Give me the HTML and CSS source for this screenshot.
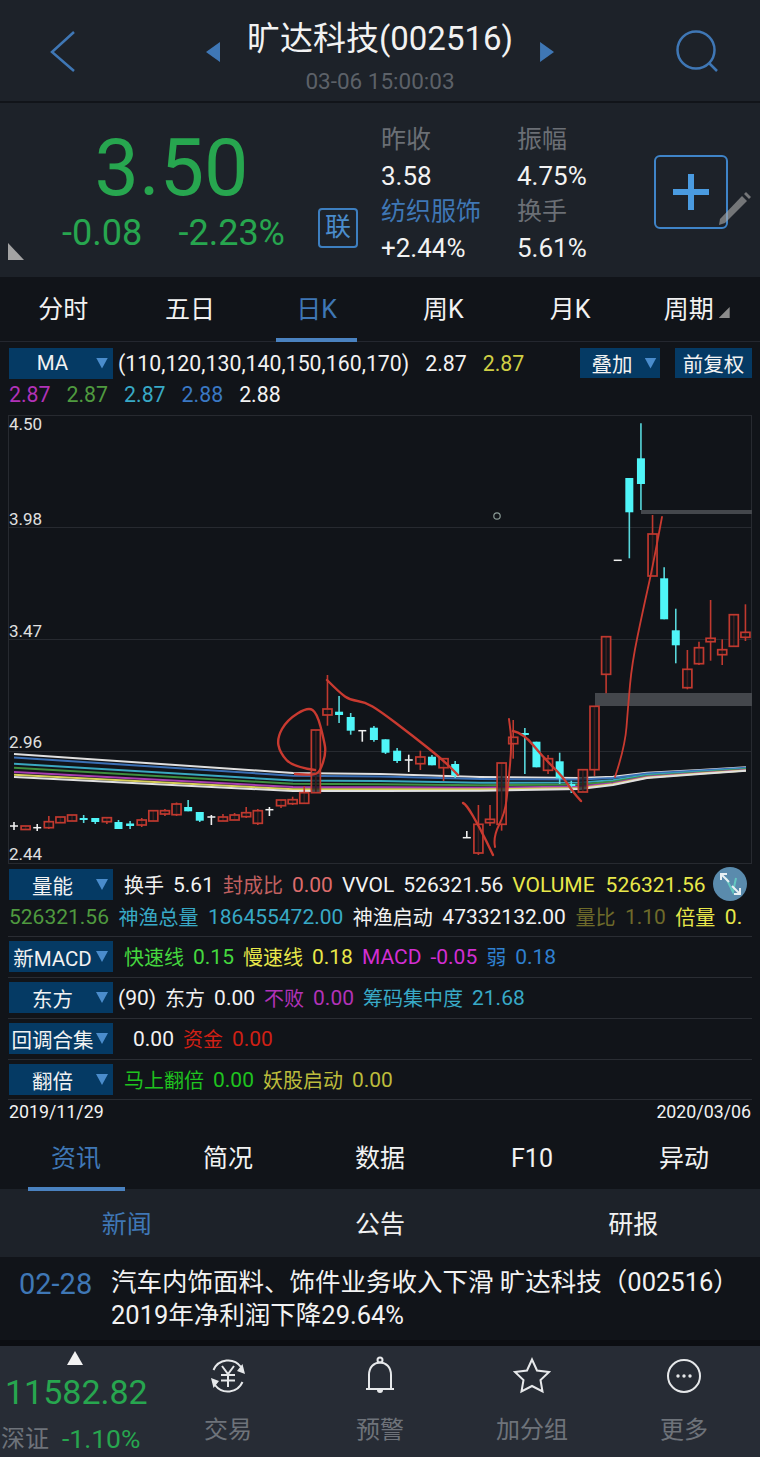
FILE: index.html
```html
<!DOCTYPE html>
<html lang="zh-CN">
<head>
  <meta charset="UTF-8">
  <meta name="viewport" content="width=device-width, initial-scale=1.0">
  <title>旷达科技(002516)</title>
  <link rel="stylesheet" href="styles.css">
</head>
<body>
  <header class="topbar">
    <div class="topbar-side">
      <svg class="back-icon" width="26" height="44" viewBox="0 0 26 44"><path d="M24 2 2 22l22 19"/></svg>
    </div>
    <div class="topbar-mid">
      <div class="title-row">
        <span class="arrow arrow-left"></span>
        <span class="title">旷达科技(002516)</span>
        <span class="arrow arrow-right"></span>
      </div>
      <div class="time">03-06 15:00:03</div>
    </div>
    <div class="topbar-side side-right">
      <svg class="search-icon" width="44" height="44" viewBox="0 0 44 44"><circle cx="21" cy="20" r="18.5"/><path d="M34 33l8 8"/></svg>
    </div>
  </header>

  <section class="quote">
    <div class="price-box">
      <div class="price">3.50</div>
      <div class="change"><span>-0.08</span><span>-2.23%</span></div>
    </div>
    <div class="lian">联</div>
    <div class="stats">
      <span class="muted">昨收</span><span class="muted">振幅</span>
      <span>3.58</span><span>4.75%</span>
      <span class="blue">纺织服饰</span><span class="muted">换手</span>
      <span>+2.44%</span><span>5.61%</span>
    </div>
    <div class="add-btn"><span class="plus"></span></div>
    <svg class="pencil" width="36" height="36" viewBox="0 0 36 36"><path d="M4 29 26 6l5 5-22 22-6 2z"/><path d="M28 4l2-2 5 5-2 2z"/></svg>
    <span class="corner"></span>
  </section>

  <nav class="tabs">
    <div class="tab">分时</div>
    <div class="tab">五日</div>
    <div class="tab on"><span>日K</span></div>
    <div class="tab">周K</div>
    <div class="tab">月K</div>
    <div class="tab">周期<i class="tab-mark"></i></div>
  </nav>

  <section class="ma">
    <div class="ma-row">
      <div class="sel"><span class="sel-text">MA</span><i class="sel-arrow"></i></div>
      <span class="ma-params">(110,120,130,140,150,160,170)</span>
      <span class="ma-val">2.87</span>
      <span class="ma-val c-yellow">2.87</span>
      <div class="ma-btns">
        <div class="btn btn-add">叠加<i class="sel-arrow"></i></div>
        <div class="btn btn-fq">前复权</div>
      </div>
    </div>
    <div class="ma-row2">
      <span class="c-purple">2.87</span>
      <span class="c-green">2.87</span>
      <span class="c-cyan">2.87</span>
      <span class="c-blue">2.88</span>
      <span>2.88</span>
    </div>
  </section>

  <svg id="chart" class="chart" width="760" height="450" viewBox="0 415 760 450"></svg>

  <section class="indicators">
    <div class="ind ind-first">
      <div class="ind-line">
        <div class="sel"><span class="sel-text">量能</span><i class="sel-arrow"></i></div>
        <span>换手</span><span class="n">5.61</span>
        <span class="c-rose">封成比</span><span class="n c-salmon">0.00</span>
        <span class="n">VVOL</span><span class="n">526321.56</span>
        <span class="n c-lemon">VOLUME</span><span class="n nudge c-lemon">526321.56</span>
      </div>
      <div class="ind-line line-two">
        <span class="n c-green">526321.56</span>
        <span class="c-cyan">神渔总量</span><span class="n c-cyan">186455472.00</span>
        <span>神渔启动</span><span class="n">47332132.00</span>
        <span class="c-olive">量比</span><span class="n c-olive">1.10</span>
        <span class="c-lemon">倍量</span><span class="n c-lemon">0.</span>
      </div>
    </div>
    <div class="ind">
      <div class="ind-line">
        <div class="sel"><span class="sel-text">新MACD</span><i class="sel-arrow"></i></div>
        <span class="c-lime">快速线</span><span class="n c-lime">0.15</span>
        <span class="c-lemon">慢速线</span><span class="n c-lemon">0.18</span>
        <span class="n c-pink">MACD</span><span class="n c-pink">-0.05</span>
        <span class="c-sky">弱</span><span class="n c-sky">0.18</span>
      </div>
    </div>
    <div class="ind">
      <div class="ind-line">
        <div class="sel"><span class="sel-text">东方</span><i class="sel-arrow"></i></div>
        <span class="n lead">(90)</span><span>东方</span><span class="n">0.00</span>
        <span class="c-purple">不败</span><span class="n c-purple">0.00</span>
        <span class="c-cyan">筹码集中度</span><span class="n c-cyan">21.68</span>
      </div>
    </div>
    <div class="ind">
      <div class="ind-line">
        <div class="sel"><span class="sel-text">回调合集</span><i class="sel-arrow"></i></div>
        <span class="n push">0.00</span>
        <span class="c-red">资金</span><span class="n c-red">0.00</span>
      </div>
    </div>
    <div class="ind ind-last">
      <div class="ind-line">
        <div class="sel"><span class="sel-text">翻倍</span><i class="sel-arrow"></i></div>
        <span class="c-grass">马上翻倍</span><span class="n c-grass">0.00</span>
        <span class="c-khaki">妖股启动</span><span class="n c-khaki">0.00</span>
      </div>
    </div>
    <div class="dates"><span>2019/11/29</span><span>2020/03/06</span></div>
    <svg class="swap" width="34" height="34" viewBox="0 0 34 34">
      <circle cx="17" cy="17" r="17" fill="#5a8bad"/>
      <path d="M13 11l7 14 3-14" fill="none" stroke="#63c7c0" stroke-width="2"/>
      <path d="M16 15 8 7M8 13V7h6M19 19l8 8M27 21v6h-6" fill="none" stroke="#e8f0f4" stroke-width="2"/>
    </svg>
  </section>

  <nav class="tabs2">
    <div class="tab2 on"><span>资讯</span></div>
    <div class="tab2">简况</div>
    <div class="tab2">数据</div>
    <div class="tab2">F10</div>
    <div class="tab2">异动</div>
  </nav>

  <nav class="subtabs">
    <div class="subtab on">新闻</div>
    <div class="subtab">公告</div>
    <div class="subtab">研报</div>
  </nav>

  <section class="news">
    <span class="news-date">02-28</span>
    <p class="news-text">汽车内饰面料、饰件业务收入下滑 旷达科技（002516）<br>2019年净利润下降29.64%</p>
  </section>

  <footer class="bottom">
    <div class="index">
      <i class="index-up"></i>
      <div class="index-num">11582.82</div>
      <div class="index-line"><span class="index-name">深证</span><span class="index-pct">-1.10%</span></div>
    </div>
    <div class="nav-item">
      <svg class="nav-icon" width="40" height="40" viewBox="0 0 40 40">
        <path d="M5.5 14A16 16 0 0 1 33 11M34.5 26A16 16 0 0 1 7 29"/>
        <path class="solid" d="M34.5 8l2.5 10-8-3zM5.5 32 3 22l8 3z"/>
        <path d="M14 10l6 8 6-8M20 18v13M13 19h14M13 24.5h14"/>
      </svg>
      <span>交易</span>
    </div>
    <div class="nav-item">
      <svg class="nav-icon" width="40" height="40" viewBox="0 0 40 40">
        <circle cx="20" cy="4" r="2.5"/>
        <path d="M9 32V19C9 11 14 6.5 20 6.5S31 11 31 19v13M6 33h28"/>
        <path class="solid" d="M17 34a3 3 0 0 0 6 0z"/>
      </svg>
      <span>预警</span>
    </div>
    <div class="nav-item">
      <svg class="nav-icon" width="40" height="40" viewBox="0 0 40 40">
        <path d="M20 3.5l5 11 12 1.5-8.5 8 2 11.5L20 30 9.500 35.500l2-11.500L3 16l12-1.500z"/>
      </svg>
      <span>加分组</span>
    </div>
    <div class="nav-item">
      <svg class="nav-icon" width="40" height="40" viewBox="0 0 40 40">
        <circle cx="20" cy="20" r="16"/>
        <circle class="solid" cx="14" cy="20" r="1.7"/>
        <circle class="solid" cx="20" cy="20" r="1.7"/>
        <circle class="solid" cx="26" cy="20" r="1.7"/>
      </svg>
      <span>更多</span>
    </div>
  </footer>

  <script src="chart.js"></script>
</body>
</html>
```

FILE: styles.css
```css
* {
  box-sizing: border-box;
}

body {
  margin: 0;
  width: 760px;
  height: 1457px;
  overflow: hidden;
  background-color: #111419;
  color: #f2f2f2;
  font-family: Roboto, "Noto Sans CJK SC", sans-serif;
}

/* top bar */
.topbar {
  display: flex;
  height: 103px;
  background-color: #1d2229;
  border-bottom: 2px solid #111419;
}

.topbar-side {
  flex: 1;
  padding-top: 30px;
}

.back-icon {
  margin-left: 50px;
}

.side-right {
  display: flex;
  justify-content: flex-end;
}

.search-icon {
  margin-right: 41px;
}

.back-icon, .search-icon {
  fill: none;
  stroke: #3f77b5;
  stroke-width: 2.5px;
}

.topbar-mid {
  padding-top: 17px;
  text-align: center;
}

.title-row {
  display: flex;
  align-items: center;
  gap: 27px;
  height: 44px;
}

.title {
  font-size: 33px;
  line-height: 44px;
}

.arrow {
  width: 14px;
  height: 20px;
  margin-top: 26px;
  background-color: #3f77b5;
}

.arrow-left {
  clip-path: polygon(0 50%, 100% 0, 100% 100%);
}

.arrow-right {
  clip-path: polygon(0 0, 100% 50%, 0 100%);
}

.time {
  margin-top: 5px;
  font-size: 22.5px;
  line-height: 30px;
  color: #5c6168;
}

/* price block */
.quote {
  position: relative;
  display: flex;
  height: 174px;
  background-color: #1d2229;
}

.price-box {
  width: 256px;
  margin-left: 62px;
  padding-top: 21px;
  color: #27a64f;
}

.price {
  width: 219px;
  font-size: 79px;
  line-height: 88px;
  text-align: center;
}

.change {
  display: flex;
  justify-content: space-between;
  width: 223px;
  margin-top: -1px;
  font-size: 36px;
  line-height: 44px;
}

.lian {
  width: 40px;
  height: 40px;
  margin-top: 105px;
  border: 2px solid #3d7fc0;
  border-radius: 4px;
  font-size: 26px;
  line-height: 35px;
  text-align: center;
  color: #4a8ccc;
}

.stats {
  display: grid;
  grid-template-columns: 136px 137px;
  grid-auto-rows: 36px;
  margin: 19px 0 0 23px;
  font-size: 26px;
  line-height: 36px;
  white-space: nowrap;
}

.muted {
  color: #6b6f75;
  font-size: 25px;
}

.blue {
  color: #3f77b5;
  font-size: 25px;
}

.add-btn {
  display: flex;
  align-items: center;
  justify-content: center;
  width: 74px;
  height: 74px;
  margin-top: 52px;
  border: 2.5px solid #3f84c8;
  border-radius: 6px;
}

.plus {
  width: 36px;
  height: 36px;
  border-radius: 3px;
  background:
    linear-gradient(#4a9be0, #4a9be0) center / 100% 6px no-repeat,
    linear-gradient(#4a9be0, #4a9be0) center / 6px 100% no-repeat;
}

.pencil {
  position: absolute;
  left: 716px;
  top: 87px;
  fill: rgba(170, 170, 170, 0.62);
}

.corner {
  position: absolute;
  left: 8px;
  top: 140px;
  width: 16px;
  height: 17px;
  background-color: #a3a3a3;
  clip-path: polygon(0 0, 100% 100%, 0 100%);
}

/* period tabs */
.tabs {
  display: flex;
  height: 65px;
  border-bottom: 1px solid #24272f;
}

.tab {
  flex: 1;
  font-size: 25px;
  line-height: 65px;
  text-align: center;
}

.tab.on {
  color: #3f77b5;
}

.tab.on span {
  display: inline-block;
  width: 81px;
  height: 65px;
  border-bottom: 4px solid #4a82c0;
}

.tab-mark {
  display: inline-block;
  width: 11px;
  height: 11px;
  margin-left: 5px;
  background-color: #8c8c8c;
  clip-path: polygon(100% 0, 100% 100%, 0 100%);
}

/* MA row */
.ma {
  height: 73px;
  padding: 6px 8px 0 9px;
  font-size: 21.3px;
}

.ma-row {
  display: flex;
  align-items: center;
  height: 30px;
}

.ma-params {
  margin-left: 5px;
}

.ma-val {
  margin-left: 16px;
}

.ma-btns {
  display: flex;
  gap: 15px;
  margin-left: auto;
  font-size: 20.5px;
}

.btn {
  display: flex;
  align-items: center;
  justify-content: center;
  height: 30px;
  background-color: #053a64;
}

.btn-add {
  gap: 12px;
  width: 80px;
  padding-left: 8px;
}

.btn-fq {
  width: 77px;
}

.ma-row2 {
  display: flex;
  gap: 16px;
  line-height: 34px;
}

.sel {
  display: flex;
  align-items: center;
  flex: none;
  width: 104px;
  height: 31px;
  background-color: #053a64;
  color: #f2f2f2;
}

.sel-text {
  width: 87px;
  text-align: center;
  font-size: 20.5px;
  white-space: nowrap;
}

.sel-arrow {
  flex: none;
  width: 12px;
  height: 11px;
  background-color: #4a8ccc;
  clip-path: polygon(0 0, 100% 0, 50% 100%);
}

/* chart */
.chart {
  display: block;
}

.axis-label {
  fill: #e0e0e0;
  font-size: 17px;
}

/* indicators */
.indicators {
  position: relative;
  height: 260px;
  padding: 0 8px;
  font-size: 20px;
}

.n {
  font-size: 21px;
}

.ind {
  padding: 4px 0 5px 1px;
  border-bottom: 1px solid #2a2d33;
}

.ind-first, .ind-last {
  padding-bottom: 4px;
}

.ind-line {
  display: flex;
  align-items: center;
  gap: 9px;
  height: 31px;
  white-space: nowrap;
}

.ind-line .sel {
  margin-right: 2px;
}

.line-two {
  gap: 9.5px;
  margin-top: 1px;
}

.nudge {
  margin-left: 2px;
}

.lead {
  margin-left: -6px;
}

.push {
  margin-left: 9px;
}

.swap {
  position: absolute;
  left: 713px;
  top: 2px;
}

.dates {
  display: flex;
  justify-content: space-between;
  padding: 0 1px;
  font-size: 17.8px;
  line-height: 24px;
}

.c-yellow { color: #cfcf45; }
.c-purple { color: #b232b8; }
.c-green { color: #4f9a3f; }
.c-cyan { color: #38a9c6; }
.c-blue { color: #3a78c4; }
.c-rose { color: #c06060; }
.c-salmon { color: #dd6c6c; }
.c-lemon { color: #e8e84a; }
.c-olive { color: #6e6a2a; }
.c-lime { color: #45d83f; }
.c-pink { color: #d22ed2; }
.c-sky { color: #2f80cf; }
.c-red { color: #cf2015; }
.c-grass { color: #1fc31f; }
.c-khaki { color: #bcbc3c; }

/* lower tabs */
.tabs2 {
  display: flex;
  height: 64px;
}

.tab2 {
  flex: 1;
  font-size: 25px;
  line-height: 68px;
  text-align: center;
}

.tab2.on {
  color: #3f77b5;
}

.tab2.on span {
  display: inline-block;
  width: 97px;
  height: 66px;
  border-bottom: 4px solid #4a82c0;
  position: relative;
  z-index: 1;
}

.subtabs {
  display: flex;
  height: 68px;
  background-color: #1d2229;
}

.subtab {
  flex: 1;
  font-size: 25px;
  line-height: 72px;
  text-align: center;
}

.subtab.on {
  color: #3f77b5;
}

.news {
  display: flex;
  height: 89px;
  padding: 9px 0 0 19px;
  border-bottom: 6px solid #0c0e12;
}

.news-date {
  width: 92px;
  font-size: 29px;
  line-height: 36px;
  color: #3f77b5;
}

.news-text {
  margin: 0;
  font-size: 25.5px;
  line-height: 33px;
  white-space: nowrap;
}

/* bottom nav */
.bottom {
  display: flex;
  height: 111px;
  background-color: #272c35;
}

.index {
  width: 152px;
  color: #27a64f;
}

.index-up {
  display: block;
  width: 16px;
  height: 14px;
  margin: 5px 0 0 67px;
  background-color: #f2f2f2;
  clip-path: polygon(50% 0, 100% 100%, 0 100%);
}

.index-num {
  margin-left: 5px;
  font-size: 34px;
  line-height: 54px;
  white-space: nowrap;
}

.index-line {
  display: flex;
  align-items: center;
  gap: 13px;
  margin-left: 1px;
  line-height: 40px;
}

.index-name {
  font-size: 24px;
  color: #6e737a;
}

.index-pct {
  font-size: 26.5px;
}

.nav-item {
  flex: 1;
  padding-top: 10px;
  text-align: center;
  font-size: 24px;
  color: #6e737a;
}

.nav-item span {
  display: block;
  margin-top: 14px;
  line-height: 40px;
}

.nav-icon {
  display: block;
  margin: 0 auto;
  fill: none;
  stroke: #e6e8ea;
  stroke-width: 2px;
}

.nav-icon .solid {
  fill: #e6e8ea;
  stroke: none;
}
```

FILE: chart.js
```js
var svgNs = 'http://www.w3.org/2000/svg';
var chart = document.getElementById('chart');

function add(tag, attrs) {
  var el = document.createElementNS(svgNs, tag);
  for (var k in attrs) {
    el.setAttribute(k, attrs[k]);
  }
  chart.appendChild(el);
  return el;
}

// frame and grid
add('rect', { x: 8.5, y: 415.5, width: 743, height: 448, fill: 'none', stroke: '#272a30' });
[527.5, 639.5, 751.5].forEach(function (y) {
  add('line', { x1: 8, x2: 752, y1: y, y2: y, stroke: '#272a30' });
});

[['4.50', 424], ['3.98', 519], ['3.47', 631], ['2.96', 742], ['2.44', 854]].forEach(function (l) {
  var t = add('text', { x: 9, y: l[1] + 6, 'class': 'axis-label' });
  t.textContent = l[0];
});

// MA lines: each one sits between the top and bottom envelope
var xs = [14, 293, 380, 480, 580, 613, 647, 700, 746];
var topY = [754, 773, 774, 777, 778, 776.7, 772.7, 770, 767.3];
var botY = [777, 791, 791, 790.7, 789, 785, 778, 774, 770.7];
var maLines = [
  [0, '#e0e0e0'], [0.15, '#3a6fb5'], [0.42, '#3aa7c0'], [0.6, '#3f8f3f'],
  [0.78, '#a83fb0'], [0.9, '#d8cf5a'], [1, '#e0e0e0']
];
maLines.forEach(function (m) {
  var pts = xs.map(function (x, i) {
    return x + ',' + (topY[i] + (botY[i] - topY[i]) * m[0]).toFixed(1);
  });
  add('polyline', { points: pts.join(' '), fill: 'none', stroke: m[1], 'stroke-width': 2 });
});

// grey support bars
add('rect', { x: 641, y: 510, width: 111, height: 4, fill: '#44474c' });
add('rect', { x: 595, y: 693, width: 157, height: 13, fill: '#44474c' });
add('circle', { cx: 497, cy: 516, r: 3.2, fill: 'none', stroke: '#8a9a95', 'stroke-width': 1.2 });

// type, body top, body bottom, wick top, wick bottom
var candles = [
  ['w', 826, 826, 822, 830], ['r', 826, 829.5, 826, 830], ['w', 827.7, 827.7, 824, 831],
  ['r', 821.7, 827.7, 816, 829], ['r', 817, 822.7, 817, 823], ['r', 815, 821, 815, 821],
  ['c', 818, 820, 815, 823], ['c', 818, 822, 818, 824], ['r', 817.7, 821.7, 817.7, 824],
  ['c', 822, 829, 820, 829], ['c', 823.5, 826, 821, 829], ['r', 820, 825, 818, 827],
  ['r', 810.7, 821, 810, 821], ['r', 810.7, 814, 809, 816], ['r', 804, 814.7, 802.5, 816],
  ['c', 807, 811.3, 800, 811.3], ['c', 812, 820.7, 812, 822], ['w', 817, 817, 815, 825],
  ['r', 817, 821, 814, 821], ['r', 815, 820, 813, 820], ['r', 812.7, 816.7, 807, 818],
  ['r', 810.7, 823.3, 809, 825], ['w', 809.7, 809.7, 807, 816], ['r', 800, 805.7, 800, 808],
  ['r', 799.7, 803.7, 796.7, 805], ['r', 792.7, 803.3, 786, 804], ['r', 730, 792.7, 730, 793],
  ['r', 709, 715, 675, 725.7], ['c', 711.7, 715, 696, 723], ['c', 717, 730.7, 713, 734.7],
  ['w', 730.7, 730.7, 730.7, 741.7], ['c', 727.7, 740, 726, 741.7], ['c', 739.3, 752.7, 739.3, 754],
  ['c', 750.7, 761, 748, 763], ['w', 760, 760, 754.7, 772], ['r', 757, 763.7, 750.7, 770],
  ['c', 756.7, 765.3, 755, 765.3], ['r', 758.7, 767.7, 758.7, 781], ['c', 764, 775.7, 761, 778],
  ['w', 837.7, 837.7, 831, 837.7], ['r', 824.3, 853, 805, 855], ['r', 819.3, 822.7, 805, 826],
  ['r', 763, 824.3, 763, 830.7], ['r', 737.3, 743.7, 720, 758.7], ['c', 733, 735, 728, 774],
  ['c', 741.7, 767.3, 741.7, 767.3], ['r', 758.7, 770.3, 755, 774], ['c', 761.3, 778.3, 752.7, 784],
  ['c', 784, 786, 780.7, 793], ['r', 769.7, 792, 769.7, 792], ['r', 706.3, 769.7, 706.3, 776],
  ['r', 636.7, 674.3, 636.7, 693.3], ['w', 560.3, 560.3, 560.3, 560.3], ['c', 478, 512.3, 478, 558.3],
  ['c', 458.3, 484, 423.3, 510], ['r', 534, 576, 515, 576], ['c', 578.3, 619.3, 567.3, 619.3],
  ['c', 630.3, 645.3, 608.7, 663.3], ['r', 669.3, 687.7, 650, 689.3], ['r', 647.7, 663.7, 641.7, 665],
  ['r', 638.3, 641.7, 600, 660.7], ['r', 649.7, 654.7, 639.3, 665], ['r', 614.7, 646.3, 614.7, 647],
  ['r', 632.3, 637.3, 604.3, 641]
];

candles.forEach(function (c, i) {
  var x = 14 + i * 11.61;
  var kind = c[0];
  var color = kind === 'r' ? '#c0392f' : kind === 'c' ? '#58d8dc' : '#f0f0f0';
  add('line', { x1: x, x2: x, y1: c[3], y2: c[4], stroke: color, 'stroke-width': 1.6 });
  if (kind === 'w') {
    add('line', { x1: x - 4, x2: x + 4, y1: c[1], y2: c[1], stroke: color, 'stroke-width': 1.5 });
  } else if (kind === 'c') {
    add('rect', { x: x - 4, y: c[1], width: 8, height: c[2] - c[1], fill: '#4ff5f8' });
  } else {
    add('rect', { x: x - 4.5, y: c[1], width: 9, height: c[2] - c[1], fill: '#111419', 'fill-opacity': 0.75, stroke: color, 'stroke-width': 1.7 });
  }
});

// hand drawn red marks on top of the chart
function smooth(pts) {
  var d = 'M' + pts[0][0] + ' ' + pts[0][1];
  for (var i = 1; i < pts.length - 1; i++) {
    var mx = (pts[i][0] + pts[i + 1][0]) / 2;
    var my = (pts[i][1] + pts[i + 1][1]) / 2;
    d += 'Q' + pts[i][0] + ' ' + pts[i][1] + ' ' + mx + ' ' + my;
  }
  var last = pts[pts.length - 1];
  return d + 'L' + last[0] + ' ' + last[1];
}

var marks = [
  [[315, 770], [293, 767], [280, 753], [277, 738], [287, 720], [308, 707], [317, 713], [324, 740], [326, 753], [320, 772], [313, 775], [295, 774]],
  [[327, 680], [340, 693], [350, 700], [365, 702], [380, 711], [413, 736], [443, 760], [458, 775]],
  [[463, 803], [466, 804], [480, 828], [493, 855]],
  [[495, 847], [493, 837], [505, 813], [508, 787], [512, 743], [509, 719]],
  [[513, 731], [523, 733], [543, 757], [563, 777], [573, 792], [581, 801]],
  [[615, 777], [625, 747], [628, 707], [632, 663], [643, 610], [652, 570], [662, 517]]
];
marks.forEach(function (m, i) {
  var width = i === 5 ? 1.8 : i === 3 ? 2 : 2.4;
  add('path', { d: smooth(m), fill: 'none', stroke: '#c93a30', 'stroke-width': width, 'stroke-linecap': 'round' });
});
```
